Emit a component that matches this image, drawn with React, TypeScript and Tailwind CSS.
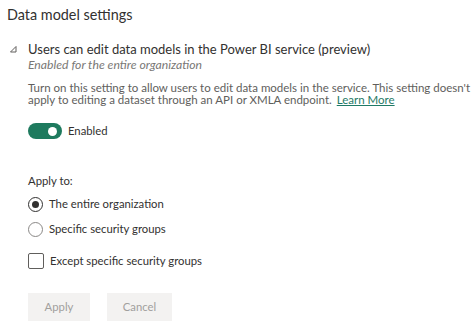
export default function App() {
  return (
    <div className="h-[326px] w-[474px] overflow-hidden bg-white font-['Lato',sans-serif] text-[#323130]">
      <h1 className="pl-[7px] pt-[5px] text-[14.4px] leading-[20px] text-[#323130]">Data model settings</h1>

      <div className="mt-[16px] flex items-start pl-[10px]">
        <svg width="7" height="7" viewBox="0 0 7 7" className="mt-[5px] shrink-0">
          <path d="M6 0.5 L6 6 L0.5 6 Z" fill="none" stroke="#605e5c" strokeWidth="1" />
        </svg>
        <div className="ml-[11px]">
          <div className="text-[13px] leading-[16px]">Users can edit data models in the Power BI service (preview)</div>
          <div className="text-[12.2px] italic leading-[16px] text-[#797775]">Enabled for the entire organization</div>
        </div>
      </div>

      <div className="pl-[28px]">
        <p className="mt-[9px] whitespace-nowrap text-[11.5px] leading-[12px] text-[#605e5c]">
          Turn on this setting to allow users to edit data models in the service. This setting doesn't
          <br />
          apply to editing a dataset through an API or XMLA endpoint.{" "}
          <a className="ml-[2px] text-[#1f7a66] underline">Learn More</a>
        </p>

        <div className="mt-[17px] flex items-center gap-[6px]">
          <div className="flex h-[16px] w-[34px] items-center justify-end rounded-full bg-[#1e7a5e] pr-[5px]">
            <div className="h-[9px] w-[9px] rounded-full bg-white" />
          </div>
          <span className="text-[11.3px] leading-[16px] text-[#323130]">Enabled</span>
        </div>

        <div className="mt-[34px] text-[11.3px] leading-[16px]">Apply to:</div>

        <div className="mt-[7px] flex items-center gap-[6px]">
          <div className="flex h-[15px] w-[15px] items-center justify-center rounded-full border border-[#323130]">
            <div className="h-[7px] w-[7px] rounded-full bg-[#323130]" />
          </div>
          <span className="text-[11.3px] leading-[16px]">The entire organization</span>
        </div>
        <div className="mt-[9px] flex items-center gap-[6px]">
          <div className="h-[15px] w-[15px] rounded-full border border-[#8a8886]" />
          <span className="text-[11.3px] leading-[16px]">Specific security groups</span>
        </div>

        <div className="mt-[16px] flex items-center gap-[6px]">
          <div className="h-[16px] w-[16px] rounded-[2px] border border-[#605e5c]" />
          <span className="text-[11.3px] leading-[16px]">Except specific security groups</span>
        </div>

        <div className="mt-[24px] flex gap-[17px]">
          <button className="h-[28px] w-[62px] bg-[#f3f2f1] text-[11.3px] text-[#a19f9d]">Apply</button>
          <button className="h-[28px] w-[65px] bg-[#f3f2f1] text-[11.3px] text-[#a19f9d]">Cancel</button>
        </div>
      </div>
    </div>
  );
}
